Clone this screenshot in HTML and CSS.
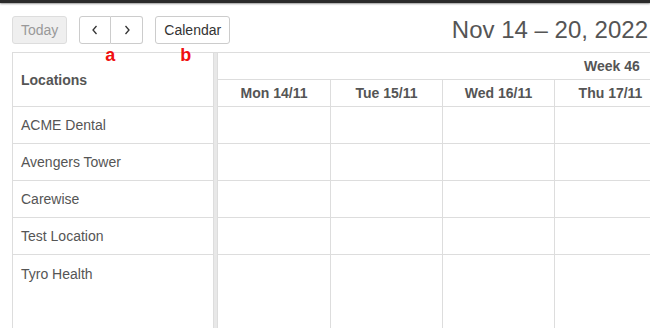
FILE: index.html
```html
<!DOCTYPE html>
<html>
<head>
  <title>Scheduler</title>
  <link rel="stylesheet" href="styles.css">
</head>
<body>

<div class="topbar"></div>

<div class="page">
  <div class="toolbar">
    <div class="left-tools">
      <button class="btn" disabled>Today</button>
      <div class="btn-group">
        <button class="btn arrow" aria-label="prev">
          <svg width="8" height="12" viewBox="0 0 8 12"><path d="M5.5 2 L2 6 L5.5 10" fill="none" stroke="#333" stroke-width="1.3"/></svg>
        </button>
        <button class="btn arrow" aria-label="next">
          <svg width="8" height="12" viewBox="0 0 8 12"><path d="M2.5 2 L6 6 L2.5 10" fill="none" stroke="#333" stroke-width="1.3"/></svg>
        </button>
        <span class="mark mark-a">a</span>
      </div>
      <div class="cal-wrap">
        <button class="btn">Calendar</button>
        <span class="mark mark-b">b</span>
      </div>
    </div>
    <h2 class="title">Nov 14 – 20, 2022</h2>
  </div>

  <div class="scheduler">
    <div class="resources">
      <div class="res-head">Locations</div>
      <div class="res-row">ACME Dental</div>
      <div class="res-row">Avengers Tower</div>
      <div class="res-row">Carewise</div>
      <div class="res-row">Test Location</div>
      <div class="res-row last">Tyro Health</div>
    </div>
    <div class="divider"></div>
    <div class="timeline">
      <div class="week-row"><span>Week 46</span></div>
      <div class="grid">
        <div class="day">Mon 14/11</div>
        <div class="day">Tue 15/11</div>
        <div class="day">Wed 16/11</div>
        <div class="day">Thu 17/11</div>
        <div class="day"></div>
      </div>
      <div class="grid body" id="cells"></div>
    </div>
  </div>
</div>

<script>
  var cells = document.getElementById("cells");
  for (var r = 0; r < 5; r++) {
    for (var c = 0; c < 5; c++) {
      var d = document.createElement("div");
      d.className = r == 4 ? "cell last" : "cell";
      cells.appendChild(d);
    }
  }
</script>

</body>
</html>
```

FILE: styles.css
```css
* {
  box-sizing: border-box;
  font-family: "Liberation Sans", Arial, sans-serif;
}

body {
  margin: 0;
  background: white;
  overflow: hidden;
}

.topbar {
  height: 3px;
  background: #2b2b2b;
  box-shadow: 0 1px 2px rgba(0,0,0,0.4);
}

.page {
  padding: 13px 0 0 12px;
}

.toolbar {
  display: flex;
  justify-content: space-between;
  align-items: center;
  height: 28px;
  margin-bottom: 8px;
}

.left-tools {
  display: flex;
  gap: 12px;
}

.btn {
  height: 28px;
  padding: 0 8px;
  border: 1px solid #ccc;
  border-radius: 3px;
  background: white;
  color: #333;
  font-size: 14px;
  line-height: 26px;
}

.btn:disabled {
  background: #efefef;
  color: #999;
  border-color: #ddd;
}

.btn-group {
  display: flex;
  position: relative;
}

.btn.arrow {
  width: 32px;
  padding: 0;
  display: flex;
  align-items: center;
  justify-content: center;
}

.btn-group .arrow:first-child {
  border-radius: 3px 0 0 3px;
}

.btn-group .arrow:nth-child(2) {
  border-left: none;
  border-radius: 0 3px 3px 0;
}

.cal-wrap {
  position: relative;
}

.mark {
  position: absolute;
  color: #f01010;
  font-weight: bold;
  font-size: 18px;
  line-height: 18px;
}

.mark-a {
  left: 26px;
  top: 30px;
}

.mark-b {
  left: 25px;
  top: 30px;
}

.title {
  margin: 0 2px 0 0;
  font-size: 24px;
  font-weight: normal;
  color: #555;
  white-space: nowrap;
}

.scheduler {
  display: flex;
  height: 300px;
  border-top: 1px solid #ddd;
}

.resources {
  width: 201px;
  flex: none;
  border-left: 1px solid #ddd;
}

.res-head {
  height: 54px;
  border-bottom: 1px solid #ddd;
  padding: 0 8px;
  display: flex;
  align-items: center;
  font-weight: bold;
  font-size: 14px;
  color: #555;
}

.res-row {
  height: 37px;
  border-bottom: 1px solid #ddd;
  padding: 0 8px;
  display: flex;
  align-items: center;
  font-size: 14px;
  color: #555;
}

.res-row.last {
  height: 80px;
  align-items: flex-start;
  padding-top: 11px;
  border-bottom: none;
}

.divider {
  width: 5px;
  flex: none;
  background: #e8e8e8;
  border-left: 1px solid #ddd;
  border-right: 1px solid #ddd;
}

.timeline {
  flex: 1;
  min-width: 0;
  overflow: hidden;
}

.week-row {
  height: 27px;
  border-bottom: 1px solid #ddd;
  display: flex;
  align-items: center;
  padding-left: 366px;
  font-weight: bold;
  font-size: 14px;
  color: #555;
}

.grid {
  display: grid;
  grid-template-columns: 113px repeat(4, 112px);
}

.day {
  height: 27px;
  border-right: 1px solid #ddd;
  border-bottom: 1px solid #ddd;
  display: flex;
  align-items: center;
  justify-content: center;
  font-weight: bold;
  font-size: 14px;
  color: #555;
}

.cell {
  height: 37px;
  border-right: 1px solid #ddd;
  border-bottom: 1px solid #ddd;
}

.cell.last {
  height: 80px;
  border-bottom: none;
}
```
